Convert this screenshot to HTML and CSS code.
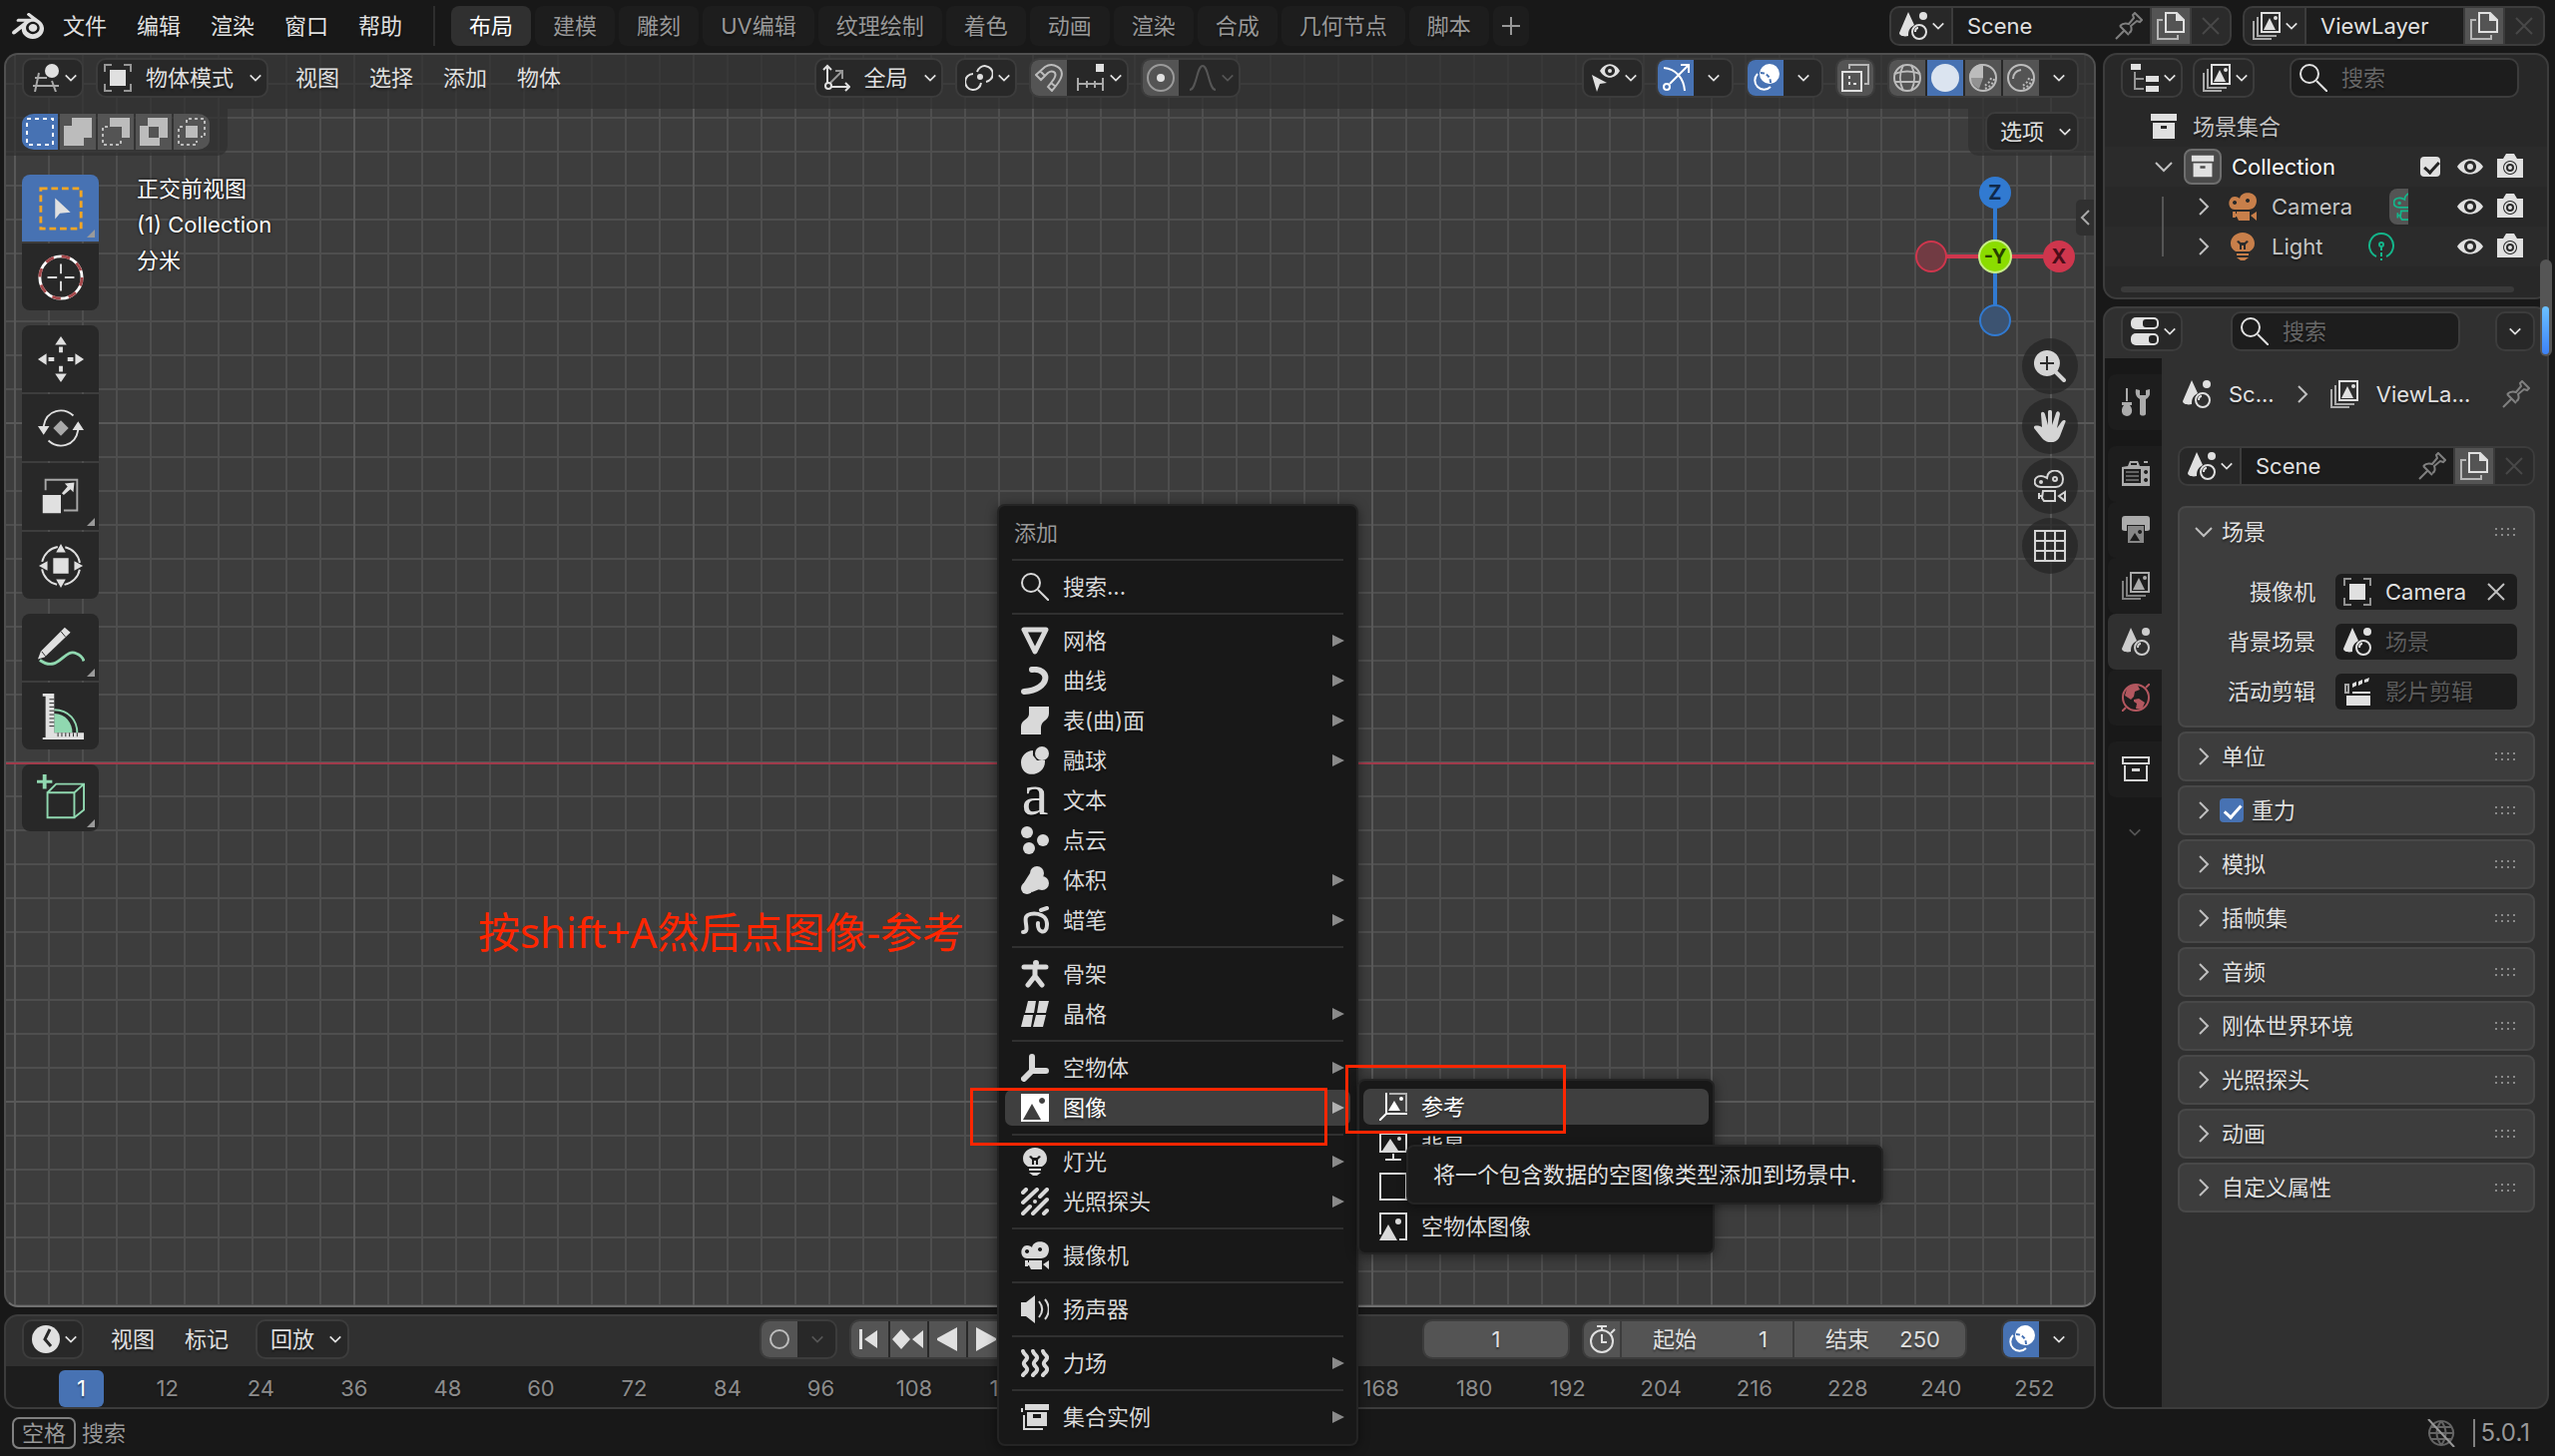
FILE: index.html
```html
<!DOCTYPE html>
<html lang="zh-CN">
<head>
<meta charset="utf-8">
<title>Blender</title>
<link rel="stylesheet" href="styles.css">
</head>
<body>
<svg class="sprite" aria-hidden="true">
  <symbol id="logo" viewBox="0 2 24 20"><path d="M12.51 13.214c.046-.8.438-1.506 1.03-2.006a3.424 3.424 0 0 1 2.212-.79c.85 0 1.631.3 2.211.79.592.5.983 1.206 1.028 2.005.045.823-.285 1.586-.865 2.153a3.389 3.389 0 0 1-2.374.938 3.393 3.393 0 0 1-2.376-.938c-.58-.567-.91-1.33-.865-2.152M7.35 14.831c.006.314.106.922.256 1.398a7.372 7.372 0 0 0 1.593 2.757 8.227 8.227 0 0 0 2.787 2.001 8.947 8.947 0 0 0 3.66.76 8.964 8.964 0 0 0 3.657-.772 8.285 8.285 0 0 0 2.785-2.01 7.428 7.428 0 0 0 1.592-2.762 6.964 6.964 0 0 0 .25-3.074 7.123 7.123 0 0 0-1.016-2.779 7.764 7.764 0 0 0-1.852-2.043h.002L13.566 2.55l-.02-.015c-.492-.378-1.319-.376-1.86.002-.547.382-.609 1.015-.123 1.415l-.001.001 3.126 2.543-9.53.01h-.013c-.788.001-1.545.518-1.695 1.172-.154.665.38 1.217 1.2 1.22V8.9l4.83-.01-8.62 6.617-.034.025c-.813.622-1.075 1.658-.563 2.313.52.667 1.625.668 2.447.004L7.414 14s-.069.52-.063.831zm12.09 1.741c-.97.988-2.326 1.548-3.795 1.55-1.47.004-2.827-.552-3.797-1.538a4.51 4.51 0 0 1-1.036-1.622 4.282 4.282 0 0 1 .282-3.519 4.702 4.702 0 0 1 1.153-1.371c.942-.768 2.141-1.183 3.396-1.185 1.256-.002 2.455.41 3.398 1.175.48.391.87.854 1.152 1.367a4.28 4.28 0 0 1 .522 1.706 4.236 4.236 0 0 1-.239 1.811 4.54 4.54 0 0 1-1.035 1.626"/></symbol>
  <symbol id="down" viewBox="0 0 16 16"><path class="ln" d="M2 5l6 6 6-6"/></symbol>
  <symbol id="bigdown" viewBox="0 0 20 20"><path class="ln" d="M2 6l8 8 8-8"/></symbol>
  <symbol id="bigright" viewBox="0 0 20 20"><path class="ln" d="M6 2l8 8-8 8"/></symbol>
  <symbol id="tri" viewBox="0 0 12 14"><path d="M0 1v12l12-6z"/></symbol>
  <symbol id="cross" viewBox="0 0 28 28"><path class="ln" d="M6 6l16 16M22 6L6 22"/></symbol>
  <symbol id="search" viewBox="0 0 28 28"><circle class="ln" cx="10" cy="10" r="9"/><path class="ln" d="M17 17l11 11"/></symbol>
  <symbol id="pin" viewBox="0 0 28 28"><path class="ln" d="M1 27l8-8M5 14l9 9M5 14c3-3 6-3 9-2l5-6-1-3 2-2 7 7-2 2-3-1-6 5c1 3 1 6-2 7"/></symbol>
  <symbol id="copy" viewBox="0 0 28 28"><path class="ln" d="M9 1h11l7 7v12H9z"/><path d="M19 0v9h9z"/><path class="ln" opacity=".7" d="M6 8H1v19h20v-4"/></symbol>
  <symbol id="scene" viewBox="0 0 28 28"><path d="M9 0L0 21c0 3 5 4 9 3 0-5 1-8 6-11z"/><circle cx="24" cy="4" r="4"/><circle class="ln" cx="20" cy="20" r="7"/><path class="ln" d="M16 20c0-2 1-4 3-4"/></symbol>
  <symbol id="layers" viewBox="0 0 28 28"><path class="ln" d="M9 1h18v19H9z"/><path d="M11 18l6-12 6 12z"/><circle cx="23" cy="6" r="2"/><path class="ln" opacity=".7" d="M5 5v19h19M1 9v18h18"/></symbol>
  <symbol id="grid3d" viewBox="0 0 28 28"><path class="ln" opacity=".7" d="M7 9L3 28M20 17l4 11M3 14h12M1 22h26"/><circle cx="20" cy="7" r="7"/></symbol>
  <symbol id="object" viewBox="0 0 28 28"><path d="M6 6h16v16H6z"/><path class="ln" opacity=".6" d="M1 8V1h7M20 1h7v7M27 20v7h-7M8 27H1v-7"/></symbol>
  <symbol id="axes" viewBox="0 0 28 28"><circle class="ln" cx="6" cy="22" r="3"/><path class="ln" d="M5 19V2M1 6l4-4 4 4M9 23h18M23 19l4 4-4 4"/><path class="ln" opacity=".6" d="M8 19L20 7M13 7h7v8"/></symbol>
  <symbol id="pivot" viewBox="0 0 28 28"><path class="ln" d="M12 8a8 8 0 1 1 9 10M16 19A8 8 0 1 1 8 10"/><circle cx="15" cy="13" r="3"/></symbol>
  <symbol id="magnet" viewBox="0 0 28 28"><path class="ln" d="M1 11L10 3C18-2 30 4 26 14c-2 5-6 9-9 13l-4-4c3-4 6-7 7-10 2-5-3-7-7-4l-7 7zM5 7l5 5M16 19l5 4"/></symbol>
  <symbol id="snapinc" viewBox="0 0 28 28"><path d="M19 0h8v8h-8z"/><path class="ln" opacity=".7" d="M1 14v13M10 17v7M18 17v7M26 14v13M1 20h25"/></symbol>
  <symbol id="prop" viewBox="0 0 28 28"><circle class="ln" opacity=".5" cx="14" cy="14" r="13"/><circle cx="14" cy="14" r="4"/></symbol>
  <symbol id="falloff" viewBox="0 0 28 28"><path class="ln" d="M1 26c7 0 7-24 13-24s6 24 13 24"/></symbol>
  <symbol id="visib" viewBox="0 0 28 28"><path fill-rule="evenodd" d="M8 7c5-9 15-9 20 0-5 9-15 9-20 0zm10-5a5 5 0 1 0 .1 0z"/><circle cx="18" cy="7" r="2"/><path d="M0 11l15 8-7 1-3 8z"/></symbol>
  <symbol id="gizmo" viewBox="0 0 28 28"><path class="ln" d="M2 4c12 1 20 10 21 23M8 20L26 2M19 1h8v8"/><circle class="ln" cx="5" cy="23" r="3"/></symbol>
  <symbol id="overlay" viewBox="0 0 28 28"><circle cx="18" cy="10" r="10"/><path class="ln" d="M6 10a9 9 0 1 0 13 13"/><path fill="none" stroke="#4772b3" stroke-width="2" stroke-dasharray="4 2" d="M9 9c6 0 10 4 10 10"/></symbol>
  <symbol id="xray" viewBox="0 0 28 28"><path class="ln" d="M1 8h19v19H1z"/><path class="ln" opacity=".7" d="M8 5V1h19v19h-4"/><path class="ln" stroke-dasharray="3 3" d="M8 12v8h8"/></symbol>
  <symbol id="wire" viewBox="0 0 28 28"><circle class="ln" cx="14" cy="14" r="13"/><path class="ln" d="M1 10c8-3 18-3 26 0M1 18h26M10 1c-4 8-4 18 0 26M18 1c4 8 4 18 0 26"/></symbol>
  <symbol id="solid" viewBox="0 0 28 28"><circle cx="14" cy="14" r="14"/></symbol>
  <symbol id="matprev" viewBox="0 0 28 28"><circle class="ln" cx="14" cy="14" r="13"/><path d="M14 0v14H0C0 6 6 0 14 0z"/><path d="M14 14h-13c1 5 5 9 9 11z" opacity=".6"/><path class="ln" stroke-dasharray="2 2" d="M25 15c-1 5-5 9-10 10M22 14c-1 4-4 7-7 8"/></symbol>
  <symbol id="rendered" viewBox="0 0 28 28"><circle class="ln" cx="14" cy="14" r="13"/><path class="ln" stroke-width="3" d="M6 15c0-5 3-8 8-9"/><path class="ln" stroke-dasharray="2 2" d="M25 15c-1 5-5 9-10 10M22 14c-1 4-4 7-7 8"/></symbol>
  <symbol id="cursor" viewBox="0 0 50 50"><path fill="none" stroke="#f5a623" stroke-width="3" stroke-dasharray="7 4" d="M4 4h42v42H4z"/><path d="M19 14v22l5-6 11-1z"/></symbol>
  <symbol id="cur3d" viewBox="0 0 50 50"><circle cx="25" cy="25" r="22" fill="none" stroke="#fff" stroke-width="3"/><circle cx="25" cy="25" r="22" fill="none" stroke="#a5484b" stroke-width="3" stroke-dasharray="9 8.280"/><path class="ln" d="M25 11v10M25 29v10M11 25h10M29 25h10"/></symbol>
  <symbol id="move" viewBox="0 0 50 50"><path d="M25 1l6 9H19zM25 49l6-9H19zM1 25l9-6v12zM49 25l-9-6v12z"/><path d="M23 12h4v6h-4zM23 32h4v6h-4zM12 23h6v4h-6zM32 23h6v4h-6z"/></symbol>
  <symbol id="rotate" viewBox="0 0 50 50"><path class="ln" stroke-width="3" d="M7 23C10 5 28 3 38 12M43 27C40 45 22 47 12 38"/><path d="M1 23h12l-6 9zM49 27H37l6-9z"/><path opacity=".7" d="M25 17l8 8-8 8-8-8z"/></symbol>
  <symbol id="scale" viewBox="0 0 50 50"><path fill="none" stroke="#a8a8a8" stroke-width="2" d="M9 18V7h33v32H28"/><path d="M6 23h19v19H6zM26 21l6-7-3-3 10-1-1 10-3-3-7 6z"/></symbol>
  <symbol id="transform" viewBox="0 0 50 50"><circle class="ln" cx="25" cy="25" r="20" stroke-dasharray="23.400 8" stroke-dashoffset="-4"/><path d="M17 17h16v16H17zM25 2l5 9H20zM25 48l5-9H20zM2 25l9-5v10zM48 25l-9-5v10z"/></symbol>
  <symbol id="annotate" viewBox="0 0 50 50"><path fill="none" stroke="#90d8b0" stroke-width="3" d="M3 38c20 14 25-13 38-7 5 2 7 5 8 8"/><path d="M1 37l3-8 25-25 6 5L8 35z"/><path fill="none" stroke="#282828" stroke-width="1" d="M25 8l5 6M5 29l4 5"/></symbol>
  <symbol id="measure" viewBox="0 0 50 50"><path fill="#90d8b0" d="M18 42V22c12 0 19 10 19 20z"/><path fill="none" stroke="#90d8b0" stroke-width="2" d="M18 18c16 0 24 12 24 24"/><path d="M6 1h12v41h31v7H6v-2h3V4H6z"/><path stroke="#282828" stroke-width="1" d="M13 7h5M13 11h5M13 15h5M13 19h5M13 23h5M13 27h5M13 31h5M13 35h5M22 42v4M26 42v4M30 42v4M34 42v4M38 42v4M42 42v4"/></symbol>
  <symbol id="addcube" viewBox="0 0 50 50"><path fill="#90d8b0" d="M6 0h4v6h6v3h-6v6H6V9H0V6h6z"/><path fill="none" stroke="#90d8b0" stroke-width="2" d="M11 19h28v26H11zM11 19l9-9h29L39 19M49 10v27l-10 8"/></symbol>
  <symbol id="zoom" viewBox="0 0 32 32"><path fill-rule="evenodd" d="M13 0a13 13 0 1 1-.1 0zM12 6v6H6v2h6v6h2v-6h6v-2h-6V6z"/><path stroke="currentColor" stroke-width="4" stroke-linecap="round" d="M21 21l9 9"/></symbol>
  <symbol id="hand" viewBox="0 0 32 32"><path d="M8 17L7 4c0-3 3-3 4 0l3 11V2c0-3 4-3 4 0v13l4-12c1-3 4-2 4 1l-3 14 5-7c2-2 5-1 3 2l-5 13c-3 8-13 8-18 2L0 18c-1-3 4-3 8-1z"/></symbol>
  <symbol id="camview" viewBox="0 0 32 32"><path class="ln" d="M7 17C-2 17-1 6 7 6c3 0 4 1 6 2C13-2 29-2 29 9c0 5-3 8-7 8z"/><circle class="ln" cx="21" cy="9" r="2"/><circle cx="7" cy="12" r="2"/><path class="ln" d="M9 21h12v10H10l-2-3zM5 23v6M5 26h4M31 22l-6 4 6 5z"/></symbol>
  <symbol id="gridbtn" viewBox="0 0 32 32"><path class="ln" d="M1 1h30v30H1zM11 1v30M21 1v30M1 11h30M1 21h30"/></symbol>
  <symbol id="outliner" viewBox="0 0 28 28"><path d="M0 0h10v6H0zM15 12h13v6H15zM15 22h13v6H15z"/><path class="ln" opacity=".6" d="M4 8v17h9M4 15h9"/></symbol>
  <symbol id="box" viewBox="0 0 28 28"><path d="M1 1h26v7H1z"/><path fill-rule="evenodd" d="M3 10h22v16H3zM11 13v3h6v-3z"/></symbol>
  <symbol id="boxline" viewBox="0 0 28 28"><path class="ln" d="M1 2h26v6H1zM3 10v15h22V10"/><path d="M10 13h8v3h-8z"/></symbol>
  <symbol id="eye" viewBox="0 0 28 28"><path fill-rule="evenodd" d="M1 14C7 4 21 4 27 14 21 24 7 24 1 14zM14 8a6 6 0 1 0 .1 0z"/><circle cx="14" cy="14" r="3"/></symbol>
  <symbol id="photo" viewBox="0 0 28 28"><path fill-rule="evenodd" d="M1 6h6l3-5h8l3 5h6v19H1zM14 8a7 7 0 1 0 .1 0z"/><circle cx="14" cy="15" r="5" class="ln"/><circle cx="14" cy="15" r="2"/></symbol>
  <symbol id="moviecam" viewBox="0 0 28 28"><path fill-rule="evenodd" d="M6 17C-2 17-1 4 6 4c3 0 4 1 5 2C12-2 28-2 28 8c0 5-3 9-8 9zM6 8a2 2 0 1 0 .1 0zM19 6a2 2 0 1 0 .1 0z"/><path d="M4 19h3v2h1v-2h13v9H10l-2-4H7v1H4zM28 19l-6 4 6 5z"/></symbol>
  <symbol id="bulb" viewBox="0 0 28 28"><path fill-rule="evenodd" d="M14 0c7 0 12 5 12 11 0 4-2 6-5 8H7c-3-2-5-4-5-8C2 5 7 0 14 0zM8 9l3 3v5h2v-4h2v4h2v-5l3-3-2-1-2 2h-4l-2-2z"/><path d="M8 21h12v2H8zM8 25h12l-4 3h-4z"/></symbol>
  <symbol id="lightdata" viewBox="0 0 28 28"><path class="ln" d="M9 24a12 12 0 1 1 10 0"/><circle class="ln" cx="14" cy="12" r="2"/><path class="ln" stroke-dasharray="4 2" d="M14 14v14"/></symbol>
  <symbol id="props" viewBox="0 0 28 28"><rect x="0" y="0" width="28" height="12" rx="5"/><rect x="12" y="2" width="14" height="8" rx="3" fill="#222"/><rect x="0" y="16" width="28" height="12" rx="5"/><rect x="18" y="18" width="8" height="8" rx="3" fill="#222"/></symbol>
  <symbol id="tools" viewBox="0 0 28 28"><path d="M4 0h2v13H4zM0 14h10v3H8c4 5 2 11-3 11S-2 22 2 17H0zM14 1c-1 6 1 8 4 10v15c1 2 5 2 6 0V11c3-2 5-4 4-10l-4 1v5h-6V2z"/></symbol>
  <symbol id="render" viewBox="0 0 28 28"><path fill-rule="evenodd" d="M0 7l6-1 2-5h8l2 5h10v20H0zM2 9v14h17V9zM24 10a2 2 0 1 0 .1 0zM24 18a2 2 0 1 0 .1 0zM9 3v2h6V3z"/><path d="M22 1h4v2h-4z"/><path class="ln" opacity=".5" d="M4 12h13M4 16h13M4 20h13"/></symbol>
  <symbol id="printer" viewBox="0 0 28 28"><path d="M0 3c0-2 1-3 3-3h22c2 0 3 1 3 3v10c0 1-1 2-3 2h-2V9H5v6H3c-2 0-3-1-3-2z"/><path opacity=".75" fill-rule="evenodd" d="M6 10h16v17H6zM8 25h10l-5-8zM18 14a2 2 0 1 0 .1 0z"/></symbol>
  <symbol id="world" viewBox="0 0 28 28"><circle class="ln" cx="14" cy="14" r="13"/><path d="M5 5c4-4 8-3 11-3l2 4-5 2-1 5-3 3-6-4zM12 16l5-1 3 2 3 2-3 7-6-1 1-5-3-2z"/><path class="ln" d="M0 28l4-4M24 4l4-4"/></symbol>
  <symbol id="clip" viewBox="0 0 28 28"><path d="M3 18h24v12H3zM9 14h18v2H9zM9 6l4-2v4l-4 2zM15 4l4-2v4l-4 2zM21 2l5-2-1 4-4 1z"/><path class="ln" opacity=".7" d="M2 7h3v8H2z"/></symbol>
  <symbol id="grip" viewBox="0 0 20 8"><path d="M0 0h2v2H0zM6 0h2v2H6zM12 0h2v2h-2zM18 0h2v2h-2zM0 6h2v2H0zM6 6h2v2H6zM12 6h2v2h-2zM18 6h2v2h-2z"/></symbol>
  <symbol id="mesh" viewBox="0 0 28 28"><path fill="none" stroke="currentColor" stroke-width="5" stroke-linejoin="round" d="M3 3h22L14 25z"/></symbol>
  <symbol id="curve" viewBox="0 0 28 28"><path fill="none" stroke="currentColor" stroke-width="6" stroke-linecap="round" d="M11 3c19-2 19 20-8 22"/></symbol>
  <symbol id="surface" viewBox="0 0 28 28"><path d="M8 0h20v7c0 7-8 7-8 14v7H0v-8c0-7 9-7 8-14z"/></symbol>
  <symbol id="meta" viewBox="0 0 28 28"><circle cx="21" cy="7" r="7"/><path d="M12 4v5l4 5h8c1 16-24 20-24 2C0 9 6 4 12 4z"/></symbol>
  <symbol id="points" viewBox="0 0 28 28"><circle cx="6" cy="6" r="6"/><circle cx="22" cy="14" r="6"/><circle cx="8" cy="22" r="6"/></symbol>
  <symbol id="volume" viewBox="0 0 28 28"><circle cx="16" cy="7" r="7"/><circle cx="21" cy="17" r="7"/><circle cx="6" cy="22" r="6"/><path d="M9 7L2 18l9 8 10-4V9z"/></symbol>
  <symbol id="gpencil" viewBox="0 0 28 28"><path fill="none" stroke="currentColor" stroke-width="4" stroke-linecap="round" d="M2 26c7 0 1-10 3-15C8 5 27 6 26 19c0 10-10 8-9-2M20 4l6-2"/></symbol>
  <symbol id="armature" viewBox="0 0 28 28"><circle cx="15" cy="3" r="3"/><path fill="none" stroke="currentColor" stroke-width="5" stroke-linecap="round" d="M3 7h22M14 9v8M14 16L7 25M14 16l7 9"/></symbol>
  <symbol id="lattice" viewBox="0 0 28 28"><path d="M7 1h8l-2 12H4zM18 1h10l-3 12h-9zM3 15h9l-2 12H0zM15 15h10l-3 12h-10z"/></symbol>
  <symbol id="empty" viewBox="0 0 28 28"><path fill="none" stroke="currentColor" stroke-width="6" stroke-linecap="round" d="M11 3v14h14M11 17l-8 8"/></symbol>
  <symbol id="image" viewBox="0 0 28 28"><path fill-rule="evenodd" d="M0 0h28v28H0zM2 26h18l-9-16zM21 4a3 3 0 1 0 .1 0z"/></symbol>
  <symbol id="probe" viewBox="0 0 28 28"><path fill="none" stroke="currentColor" stroke-width="4" stroke-linecap="round" d="M2 5l3-3M2 15L16 2M2 26l7-7M19 9l7-7M12 26l14-14M23 26l3-3"/><circle cx="14" cy="14" r="2"/></symbol>
  <symbol id="speaker" viewBox="0 0 28 28"><path d="M0 7h5l9-7v28l-9-7H0z"/><path class="ln" d="M18 6c4 5 4 11 0 16M24 4c5 6 5 14 0 20"/></symbol>
  <symbol id="force" viewBox="0 0 28 28"><path fill="none" stroke="currentColor" stroke-width="4" stroke-linecap="round" d="M2 2c1 4 5 4 4 7s-4 3-3 6 4 3 3 6-3 3-4 5M12 2c1 4 5 4 4 7s-4 3-3 6 4 3 3 6-3 3-4 5M22 2c1 4 5 4 4 7s-4 3-3 6 4 3 3 6-3 3-4 5"/></symbol>
  <symbol id="collinst" viewBox="0 0 28 28"><path d="M4 1h24v6H4z"/><path fill-rule="evenodd" d="M6 9h20v14H6zM12 11v4h8v-4z"/><path class="ln" d="M1 5v4M3 12v14h19"/></symbol>
  <symbol id="refimg" viewBox="0 0 28 28"><path class="ln" d="M7 0v21h21M7 21l-7 7"/><path class="ln" opacity=".6" d="M10 1h17v18"/><path d="M9 18l6-10 6 10z"/><circle cx="22" cy="6" r="2"/></symbol>
  <symbol id="bgimg" viewBox="0 0 28 28"><path class="ln" d="M1 1h26v18H1zM14 21v5M6 27h16"/><path d="M3 18l8-12 8 12z"/><circle cx="20" cy="6" r="2"/></symbol>
  <symbol id="square" viewBox="0 0 28 28"><path class="ln" d="M1 1h26v26H1z"/></symbol>
  <symbol id="emptyimg" viewBox="0 0 28 28"><path class="ln" d="M1 22V1h26v26h-7"/><path d="M0 28l9-16 9 16z"/><circle cx="19" cy="9" r="3"/></symbol>
  <symbol id="clock" viewBox="0 0 28 28"><circle cx="14" cy="14" r="14"/><path fill="none" stroke="#282828" stroke-width="3" d="M18 4l-5 10 6 7"/></symbol>
  <symbol id="record" viewBox="0 0 28 28"><circle class="ln" cx="14" cy="14" r="9"/></symbol>
  <symbol id="first" viewBox="0 0 28 28"><path d="M4 4h3v20H4zM22 5v18L9 14z"/></symbol>
  <symbol id="prevkey" viewBox="0 0 32 28"><path d="M9 4l9 10-9 10L0 14zM31 5v18l-11-9z"/></symbol>
  <symbol id="playrev" viewBox="0 0 28 28"><path d="M24 2v24L4 15v-2z"/></symbol>
  <symbol id="play" viewBox="0 0 28 28"><path d="M4 2v24l20-11v-2z"/></symbol>
  <symbol id="nextkey" viewBox="0 0 32 28"><path d="M23 4l9 10-9 10-9-10zM1 5v18l11-9z"/></symbol>
  <symbol id="last" viewBox="0 0 28 28"><path d="M21 4h3v20h-3zM6 5v18l13-9z"/></symbol>
  <symbol id="watch" viewBox="0 0 28 28"><circle class="ln" cx="14" cy="16" r="11"/><path class="ln" d="M14 9v8h5M14 1v4M9 1h10M23 8l4-4"/></symbol>
  <symbol id="offline" viewBox="0 0 28 28"><path class="ln" opacity=".6" d="M14 2a12 12 0 1 0 .1 0M2 14h24M4 8h20M4 20h20M14 2c-6 8-6 16 0 24M14 2c6 8 6 16 0 24"/><path class="ln" stroke-width="3" d="M1 0l26 28"/></symbol>
</svg>

<header class="topbar">
  <button class="logo" aria-label="Blender"><svg><use href="#logo"/></svg></button>
  <nav class="menus"><button>文件</button><button>编辑</button><button>渲染</button><button>窗口</button><button>帮助</button></nav>
  <span class="vsep"></span>
  <nav class="tabs">
    <button class="on">布局</button><button>建模</button><button>雕刻</button><button>UV编辑</button><button>纹理绘制</button><button>着色</button><button>动画</button><button>渲染</button><button>合成</button><button>几何节点</button><button>脚本</button><button class="plus" aria-label="添加工作区"><svg viewBox="0 0 18 18"><path class="ln" d="M9 0v18M0 9h18"/></svg></button>
  </nav>
  <div class="group idblock push scene-id">
    <button class="pick" aria-label="浏览场景"><svg class="i"><use href="#scene"/></svg><svg class="c"><use href="#down"/></svg></button>
    <span class="field"><input type="text" value="Scene" aria-label="场景名称"><svg class="i dim"><use href="#pin"/></svg></span>
    <button class="seg lit" aria-label="新建场景"><svg class="i"><use href="#copy"/></svg></button>
    <button class="seg off" aria-label="删除场景"><svg class="i"><use href="#cross"/></svg></button>
  </div>
  <div class="group idblock layer-id">
    <button class="pick" aria-label="浏览视图层"><svg class="i"><use href="#layers"/></svg><svg class="c"><use href="#down"/></svg></button>
    <span class="field"><input type="text" value="ViewLayer" aria-label="视图层名称"></span>
    <button class="seg lit" aria-label="新建视图层"><svg class="i"><use href="#copy"/></svg></button>
    <button class="seg off" aria-label="删除视图层"><svg class="i"><use href="#cross"/></svg></button>
  </div>
</header>

<main class="workspace">
  <div class="left">
    <section class="viewport">
      <div class="vp-header">
        <div class="cluster">
          <div class="group"><button class="pick" aria-label="编辑器类型"><svg class="i"><use href="#grid3d"/></svg><svg class="c"><use href="#down"/></svg></button></div>
          <label class="group dropdown"><svg class="i"><use href="#object"/></svg><select aria-label="模式"><option>物体模式</option></select><svg class="c"><use href="#down"/></svg></label>
          <nav class="menus"><button>视图</button><button>选择</button><button>添加</button><button>物体</button></nav>
        </div>
        <div class="cluster">
          <label class="group dropdown"><svg class="i"><use href="#axes"/></svg><select aria-label="变换坐标系"><option>全局</option></select><svg class="c"><use href="#down"/></svg></label>
          <div class="group"><button class="pick" aria-label="轴心点"><svg class="i"><use href="#pivot"/></svg><svg class="c"><use href="#down"/></svg></button></div>
          <div class="group"><button class="seg lit soft" aria-label="吸附"><svg class="i"><use href="#magnet"/></svg></button><button class="pick" aria-label="吸附至"><svg class="i"><use href="#snapinc"/></svg><svg class="c"><use href="#down"/></svg></button></div>
          <div class="group"><button class="seg lit" aria-label="衰减编辑"><svg class="i"><use href="#prop"/></svg></button><button class="pick faint" aria-label="衰减曲线"><svg class="i"><use href="#falloff"/></svg><svg class="c"><use href="#down"/></svg></button></div>
        </div>
        <div class="cluster shading">
          <div class="group"><button class="pick" aria-label="可见性"><svg class="i"><use href="#visib"/></svg><svg class="c"><use href="#down"/></svg></button></div>
          <div class="group"><button class="seg blue" aria-label="显示操纵器"><svg class="i"><use href="#gizmo"/></svg></button><button class="seg" aria-label="操纵器选项"><svg class="c"><use href="#down"/></svg></button></div>
          <div class="group"><button class="seg blue" aria-label="显示叠加层"><svg class="i"><use href="#overlay"/></svg></button><button class="seg" aria-label="叠加层选项"><svg class="c"><use href="#down"/></svg></button></div>
          <div class="group"><button class="seg lit" aria-label="透视模式"><svg class="i"><use href="#xray"/></svg></button></div>
          <div class="group"><button class="seg lit soft" aria-label="线框"><svg class="i"><use href="#wire"/></svg></button><button class="seg blue" aria-label="实体"><svg class="i pale"><use href="#solid"/></svg></button><button class="seg lit soft" aria-label="材质预览"><svg class="i"><use href="#matprev"/></svg></button><button class="seg lit soft" aria-label="渲染"><svg class="i"><use href="#rendered"/></svg></button><button class="seg" aria-label="着色选项"><svg class="c"><use href="#down"/></svg></button></div>
        </div>
      </div>
      <div class="vp-settings">
        <div class="ear ear-left">
          <div class="group modes">
            <button class="seg blue" aria-label="新选区"><svg class="i" viewBox="0 0 28 28"><path class="ln" stroke-dasharray="4 4" d="M1 1h26v26H1z"/></svg></button>
            <button class="seg lit soft" aria-label="扩展"><svg class="i" viewBox="0 0 28 28"><path d="M8 0h20v20h-8v8H0V8h8z"/></svg></button>
            <button class="seg lit soft" aria-label="减去"><svg class="i" viewBox="0 0 28 28"><path d="M8 0h20v20h-8V9H8z"/><path class="ln" stroke-dasharray="3 3" d="M6 9H1v18h18v-5"/></svg></button>
            <button class="seg lit soft" aria-label="差值"><svg class="i" viewBox="0 0 28 28"><path fill-rule="evenodd" d="M8 0h20v20h-8v8H0V8h8zM9 9v11h10V9z"/></svg></button>
            <button class="seg lit soft" aria-label="相交"><svg class="i" viewBox="0 0 28 28"><path d="M8 8h12v12H8z"/><path class="ln" stroke-dasharray="3 3" d="M9 5V1h18v18h-4M5 9H1v18h18v-4"/></svg></button>
          </div>
        </div>
        <div class="ear ear-right"><button class="group options">选项<svg class="c"><use href="#down"/></svg></button></div>
      </div>
      <div class="vp-body">
        <div class="toolbar">
          <div class="toolset">
            <button class="on more" aria-label="框选"><svg><use href="#cursor"/></svg></button>
            <button aria-label="游标"><svg><use href="#cur3d"/></svg></button>
          </div>
          <div class="toolset">
            <button aria-label="移动"><svg><use href="#move"/></svg></button>
            <button aria-label="旋转"><svg><use href="#rotate"/></svg></button>
            <button class="more" aria-label="缩放"><svg><use href="#scale"/></svg></button>
            <button aria-label="变换"><svg><use href="#transform"/></svg></button>
          </div>
          <div class="toolset">
            <button class="more" aria-label="标注"><svg><use href="#annotate"/></svg></button>
            <button aria-label="测量"><svg><use href="#measure"/></svg></button>
          </div>
          <div class="toolset">
            <button class="more" aria-label="添加立方体"><svg><use href="#addcube"/></svg></button>
          </div>
        </div>
        <div class="info"><p>正交前视图</p><p>(1) Collection</p><p>分米</p></div>
        <div class="navcol">
          <svg class="axisgizmo" viewBox="0 0 166 159">
            <path stroke="#317ad1" stroke-width="4" d="M83 17v128"/>
            <path stroke="#cf364d" stroke-width="4" d="M19 81h128"/>
            <circle cx="83" cy="17" r="16" fill="#317ad1"/>
            <circle cx="83" cy="145" r="15" fill="#3c5371" stroke="#317ad1" stroke-width="2"/>
            <circle cx="147" cy="81" r="16" fill="#cf364d"/>
            <circle cx="19" cy="81" r="15" fill="#713b43" stroke="#cf364d" stroke-width="2"/>
            <circle cx="83" cy="81" r="16" fill="#8bdc00" stroke="#c6ed86" stroke-width="2"/>
            <g class="axislabel"><text x="83" y="24" fill="#10294a">Z</text><text x="83" y="88" fill="#274000">-Y</text><text x="147" y="88" fill="#4a0d18">X</text></g>
          </svg>
          <button aria-label="缩放视图"><svg><use href="#zoom"/></svg></button>
          <button aria-label="平移视图"><svg><use href="#hand"/></svg></button>
          <button aria-label="摄像机视角"><svg><use href="#camview"/></svg></button>
          <button aria-label="切换正交"><svg><use href="#gridbtn"/></svg></button>
        </div>
      </div>
      <button class="sidetoggle" aria-label="侧栏"><svg viewBox="0 0 10 16"><path class="ln" d="M9 1L2 8l7 7"/></svg></button>
    </section>

    <section class="timeline">
      <div class="tl-header">
        <div class="cluster">
          <div class="group"><button class="pick" aria-label="编辑器类型"><svg class="i"><use href="#clock"/></svg><svg class="c"><use href="#down"/></svg></button></div>
          <nav class="menus"><button>视图</button><button>标记</button></nav>
          <button class="group options">回放<svg class="c"><use href="#down"/></svg></button>
        </div>
        <span class="gap-a"></span>
        <div class="cluster">
          <div class="group"><button class="seg lit soft" aria-label="自动插帧"><svg class="i"><use href="#record"/></svg></button><button class="seg faint" aria-label="插帧选项"><svg class="c"><use href="#down"/></svg></button></div>
          <div class="group transport">
            <button class="seg lit" aria-label="首帧"><svg class="i"><use href="#first"/></svg></button>
            <button class="seg lit" aria-label="上一关键帧"><svg class="i wide"><use href="#prevkey"/></svg></button>
            <button class="seg lit" aria-label="倒放"><svg class="i"><use href="#playrev"/></svg></button>
            <button class="seg lit" aria-label="播放"><svg class="i"><use href="#play"/></svg></button>
            <button class="seg lit" aria-label="下一关键帧"><svg class="i wide"><use href="#nextkey"/></svg></button>
            <button class="seg lit" aria-label="末帧"><svg class="i"><use href="#last"/></svg></button>
          </div>
        </div>
        <span class="gap-b"></span>
        <div class="cluster">
          <div class="group"><input class="frame" type="text" value="1" aria-label="当前帧"></div>
          <div class="group range">
            <button class="seg lit" aria-label="使用预览范围"><svg class="i"><use href="#watch"/></svg></button>
            <label>起始<input type="text" value="1"></label>
            <label>结束<input type="text" value="250"></label>
          </div>
          <div class="group tl-overlay"><button class="seg blue" aria-label="叠加层"><svg class="i"><use href="#overlay"/></svg></button><button class="seg" aria-label="叠加层选项"><svg class="c"><use href="#down"/></svg></button></div>
        </div>
      </div>
      <div class="ruler">
        <span class="now">1</span>
        <span>12</span><span>24</span><span>36</span><span>48</span><span>60</span><span>72</span><span>84</span><span>96</span><span>108</span><span>120</span><span>132</span><span>144</span><span>156</span><span>168</span><span>180</span><span>192</span><span>204</span><span>216</span><span>228</span><span>240</span><span>252</span>
      </div>
    </section>
  </div>

  <aside class="right">
    <section class="outliner">
      <div class="side-header">
        <div class="group"><button class="pick" aria-label="编辑器类型"><svg class="i"><use href="#outliner"/></svg><svg class="c"><use href="#down"/></svg></button></div>
        <div class="group"><button class="pick" aria-label="显示模式"><svg class="i"><use href="#layers"/></svg><svg class="c"><use href="#down"/></svg></button></div>
        <label class="group searchbox push"><svg class="i"><use href="#search"/></svg><input type="text" placeholder="搜索" aria-label="搜索大纲"></label>
      </div>
      <ul class="tree">
        <li class="row root"><svg class="i"><use href="#box"/></svg><span>场景集合</span></li>
        <li class="row coll"><svg class="t"><use href="#bigdown"/></svg><svg class="i ring"><use href="#box"/></svg><span class="active">Collection</span>
          <span class="toggles"><input class="tick" type="checkbox" checked aria-label="启用集合"><svg class="i"><use href="#eye"/></svg><svg class="i"><use href="#photo"/></svg></span></li>
        <li class="row item"><svg class="t"><use href="#bigright"/></svg><svg class="i orange"><use href="#moviecam"/></svg><span>Camera</span><span class="data cut"><svg class="i"><use href="#camview"/></svg></span>
          <span class="toggles"><svg class="i"><use href="#eye"/></svg><svg class="i"><use href="#photo"/></svg></span></li>
        <li class="row item"><svg class="t"><use href="#bigright"/></svg><svg class="i orange"><use href="#bulb"/></svg><span>Light</span><span class="data"><svg class="i"><use href="#lightdata"/></svg></span>
          <span class="toggles"><svg class="i"><use href="#eye"/></svg><svg class="i"><use href="#photo"/></svg></span></li>
      </ul>
      <div class="hscroll"></div>
    </section>

    <section class="properties">
      <div class="side-header">
        <div class="group"><button class="pick" aria-label="编辑器类型"><svg class="i"><use href="#props"/></svg><svg class="c"><use href="#down"/></svg></button></div>
        <label class="group searchbox push"><svg class="i"><use href="#search"/></svg><input type="text" placeholder="搜索" aria-label="搜索属性"></label>
        <div class="group after-search"><button class="seg" aria-label="选项"><svg class="c"><use href="#down"/></svg></button></div>
      </div>
      <div class="prop-body">
        <nav class="ptabs">
          <button class="solo" aria-label="工具"><svg class="i"><use href="#tools"/></svg></button>
          <button aria-label="渲染"><svg class="i"><use href="#render"/></svg></button>
          <button aria-label="输出"><svg class="i"><use href="#printer"/></svg></button>
          <button aria-label="视图层"><svg class="i"><use href="#layers"/></svg></button>
          <button class="on" aria-label="场景"><svg class="i"><use href="#scene"/></svg></button>
          <button class="red" aria-label="世界环境"><svg class="i"><use href="#world"/></svg></button>
          <button class="last" aria-label="集合"><svg class="i"><use href="#boxline"/></svg></button>
          <svg class="c more-tabs"><use href="#down"/></svg>
        </nav>
        <div class="pcontent">
          <div class="crumbs"><svg class="i"><use href="#scene"/></svg><span>Sc...</span><svg class="t"><use href="#bigright"/></svg><svg class="i"><use href="#layers"/></svg><span>ViewLa...</span><svg class="i dim push"><use href="#pin"/></svg></div>
          <div class="group idblock">
            <button class="pick" aria-label="浏览场景"><svg class="i"><use href="#scene"/></svg><svg class="c"><use href="#down"/></svg></button>
            <span class="field"><input type="text" value="Scene" aria-label="场景"><svg class="i dim"><use href="#pin"/></svg></span>
            <button class="seg lit" aria-label="新建"><svg class="i"><use href="#copy"/></svg></button>
            <button class="seg off" aria-label="删除"><svg class="i"><use href="#cross"/></svg></button>
          </div>
          <section class="panel open">
            <h2><button><svg class="t"><use href="#bigdown"/></svg>场景</button><svg class="grip"><use href="#grip"/></svg></h2>
            <div class="prow"><span>摄像机</span><div class="slot"><svg class="i"><use href="#object"/></svg><b>Camera</b><button aria-label="清除"><svg class="i"><use href="#cross"/></svg></button></div></div>
            <div class="prow"><span>背景场景</span><div class="slot blank"><svg class="i"><use href="#scene"/></svg><b>场景</b></div></div>
            <div class="prow"><span>活动剪辑</span><div class="slot blank"><svg class="i"><use href="#clip"/></svg><b>影片剪辑</b></div></div>
          </section>
          <div class="panels">
            <section class="panel"><h2><button><svg class="t"><use href="#bigright"/></svg>单位</button><svg class="grip"><use href="#grip"/></svg></h2></section>
            <section class="panel"><h2><button aria-label="展开重力"><svg class="t"><use href="#bigright"/></svg></button><label class="check"><input class="tick" type="checkbox" checked>重力</label><svg class="grip"><use href="#grip"/></svg></h2></section>
            <section class="panel"><h2><button><svg class="t"><use href="#bigright"/></svg>模拟</button><svg class="grip"><use href="#grip"/></svg></h2></section>
            <section class="panel"><h2><button><svg class="t"><use href="#bigright"/></svg>插帧集</button><svg class="grip"><use href="#grip"/></svg></h2></section>
            <section class="panel"><h2><button><svg class="t"><use href="#bigright"/></svg>音频</button><svg class="grip"><use href="#grip"/></svg></h2></section>
            <section class="panel"><h2><button><svg class="t"><use href="#bigright"/></svg>刚体世界环境</button><svg class="grip"><use href="#grip"/></svg></h2></section>
            <section class="panel"><h2><button><svg class="t"><use href="#bigright"/></svg>光照探头</button><svg class="grip"><use href="#grip"/></svg></h2></section>
            <section class="panel"><h2><button><svg class="t"><use href="#bigright"/></svg>动画</button><svg class="grip"><use href="#grip"/></svg></h2></section>
            <section class="panel"><h2><button><svg class="t"><use href="#bigright"/></svg>自定义属性</button><svg class="grip"><use href="#grip"/></svg></h2></section>
          </div>
        </div>
      </div>
    </section>
    <div class="vscroll"><span></span></div>
  </aside>
</main>

<footer class="status"><kbd>空格</kbd><span>搜索</span><svg class="i push"><use href="#offline"/></svg><span class="version">5.0.1</span></footer>

<div class="menu add-menu">
  <h3>添加</h3>
  <hr>
  <button><svg class="i"><use href="#search"/></svg>搜索...</button>
  <hr>
  <button><svg class="i"><use href="#mesh"/></svg>网格<svg class="a"><use href="#tri"/></svg></button>
  <button><svg class="i"><use href="#curve"/></svg>曲线<svg class="a"><use href="#tri"/></svg></button>
  <button><svg class="i"><use href="#surface"/></svg>表(曲)面<svg class="a"><use href="#tri"/></svg></button>
  <button><svg class="i"><use href="#meta"/></svg>融球<svg class="a"><use href="#tri"/></svg></button>
  <button><span class="i letter" aria-hidden="true">a</span>文本</button>
  <button><svg class="i"><use href="#points"/></svg>点云</button>
  <button><svg class="i"><use href="#volume"/></svg>体积<svg class="a"><use href="#tri"/></svg></button>
  <button><svg class="i"><use href="#gpencil"/></svg>蜡笔<svg class="a"><use href="#tri"/></svg></button>
  <hr>
  <button><svg class="i"><use href="#armature"/></svg>骨架</button>
  <button><svg class="i"><use href="#lattice"/></svg>晶格<svg class="a"><use href="#tri"/></svg></button>
  <hr>
  <button><svg class="i"><use href="#empty"/></svg>空物体<svg class="a"><use href="#tri"/></svg></button>
  <button class="on"><svg class="i"><use href="#image"/></svg>图像<svg class="a"><use href="#tri"/></svg></button>
  <hr>
  <button><svg class="i"><use href="#bulb"/></svg>灯光<svg class="a"><use href="#tri"/></svg></button>
  <button><svg class="i"><use href="#probe"/></svg>光照探头<svg class="a"><use href="#tri"/></svg></button>
  <hr>
  <button><svg class="i"><use href="#moviecam"/></svg>摄像机</button>
  <hr>
  <button><svg class="i"><use href="#speaker"/></svg>扬声器</button>
  <hr>
  <button><svg class="i"><use href="#force"/></svg>力场<svg class="a"><use href="#tri"/></svg></button>
  <hr>
  <button><svg class="i"><use href="#collinst"/></svg>集合实例<svg class="a"><use href="#tri"/></svg></button>
</div>
<div class="menu sub-menu">
  <button class="on"><svg class="i"><use href="#refimg"/></svg>参考</button>
  <button><svg class="i"><use href="#bgimg"/></svg>背景</button>
  <button aria-label="网格平面"><svg class="i"><use href="#square"/></svg></button>
  <button><svg class="i"><use href="#emptyimg"/></svg>空物体图像</button>
</div>
<div class="tooltip" role="tooltip">将一个包含数据的空图像类型添加到场景中.</div>
<div class="mark mark-image"></div>
<div class="mark mark-reference"></div>
<p class="note">按shift+A然后点图像-参考</p>
</body>
</html>
```
FILE: styles.css
```css
* { box-sizing: border-box; margin: 0; padding: 0; }
html, body { height: 100%; }
body {
  position: relative;
  display: flex;
  flex-direction: column;
  overflow: hidden;
  background: #181818;
  color: #e0e0e0;
  font: 22px/36px Inter, "Noto Sans CJK SC", sans-serif;
  text-shadow: 0 2px 2px rgba(0, 0, 0, .45);
}
button, input, select {
  border: 0;
  background: none;
  color: inherit;
  font: inherit;
  text-shadow: inherit;
  outline: 0;
}
button { display: flex; align-items: center; white-space: nowrap; }
select { appearance: none; }
svg { display: block; flex: none; fill: currentColor; overflow: visible; }
.sprite { position: absolute; width: 0; height: 0; }
.ln { fill: none; stroke: currentColor; stroke-width: 2; }
.i { flex: none; width: 28px; height: 28px; }
.i.wide { width: 32px; }
.c { width: 14px; height: 14px; }
.t { width: 20px; height: 20px; color: #c0c0c0; }
.dim { color: #808080; }
.pale { color: #dbe4f0; }
.push { margin-left: auto; }

/* shared control groups */
.group {
  display: flex;
  gap: 2px;
  height: 40px;
  border: 2px solid #3c3c3c;
  border-radius: 10px;
  background: #282828;
  overflow: hidden;
}
.cluster { display: flex; gap: 12px; }
.pick { width: 58px; padding-left: 8px; gap: 4px; }
.seg { justify-content: center; width: 36px; }
.lit { background: #545454; }
.soft { color: #bcbcbc; }
.blue { background: #4772b3; color: #fff; }
.off { background: #2b2b2b; color: #484848; }
.faint { color: #555; }
.menus { display: flex; }
.menus button { height: 40px; padding: 0 15px; }
.dropdown { align-items: center; gap: 14px; padding: 0 4px 0 6px; }
.dropdown select { height: 36px; }
.options { gap: 14px; padding: 0 5px 0 13px; }

/* top bar */
.topbar { display: flex; flex: none; height: 53px; padding: 6px 10px 0 12px; }
.logo { width: 36px; height: 40px; }
.logo svg { width: 32px; height: 28px; }
.vsep { width: 2px; height: 40px; margin: 0 16px; background: #2e2e2e; }
.tabs { display: flex; gap: 4px; }
.tabs button { height: 40px; padding: 0 18px; border-radius: 8px; background: #1d1d1d; color: #989898; }
.tabs button.on { background: #303030; color: #fff; }
.tabs .plus { padding: 0 9px; }
.plus svg { width: 18px; height: 18px; }
.scene-id { width: 343px; margin-right: 11px; }
.layer-id { width: 303px; }
.idblock { background: #3c3c3c; }
.idblock .pick { width: 60px; background: #282828; }
.idblock .seg { width: 38px; }
.field { display: flex; flex: 1; align-items: center; min-width: 0; padding: 0 7px 0 14px; background: #1d1d1d; }
.field input { flex: 1; min-width: 0; }

/* editors */
.workspace { display: flex; flex: 1; gap: 7px; min-height: 0; padding: 0 6px 0 4px; }
.left { display: flex; flex: 1; flex-direction: column; gap: 7px; min-width: 0; }
.right { position: relative; display: flex; flex: none; flex-direction: column; gap: 7px; width: 447px; }
.viewport, .timeline, .outliner, .properties { border: 2px solid #3c3c3c; border-radius: 14px; overflow: hidden; }

.viewport {
  position: relative;
  flex: 1;
  min-height: 0;
  border-color: #505050;
  border-bottom-color: #707070;
  background-color: #3d3d3d;
  background-image:
    linear-gradient(#a03a4a, #a03a4a),
    linear-gradient(#585858 2px, transparent 2px),
    linear-gradient(to right, #585858 2px, transparent 2px),
    linear-gradient(#4e4e4e 2px, transparent 2px),
    linear-gradient(to right, #4e4e4e 2px, transparent 2px);
  background-repeat: no-repeat, repeat, repeat, repeat, repeat;
  background-size: 100% 2px, 340px 340px, 340px 340px, 34px 34px, 34px 34px;
  background-position: 0 711px, 10px 30px, 10px 30px, 10px 30px, 10px 30px;
  background-origin: border-box;
}
.vp-header {
  display: flex;
  justify-content: space-between;
  height: 54px;
  padding: 3px 15px 0 16px;
  background: rgba(47, 47, 47, .7);
}
.shading { padding-left: 104px; }
.vp-settings { display: flex; justify-content: space-between; height: 47px; }
.ear { padding-top: 3px; background: rgba(47, 47, 47, .7); }
.ear-left { padding: 3px 18px 0 16px; border-bottom-right-radius: 10px; }
.ear-right { padding: 3px 15px 0 17px; border-bottom-left-radius: 10px; }
.modes { border-color: transparent; border-width: 2px 0; border-radius: 12px; background: none; background-clip: padding-box; }
.vp-body { display: flex; }
.toolbar { display: flex; flex-direction: column; gap: 15px; padding: 19px 0 0 16px; }
.toolset { display: flex; flex-direction: column; gap: 2px; border-radius: 8px; overflow: hidden; }
.toolset button { position: relative; justify-content: center; width: 77px; height: 67px; background: #282828; }
.toolset button.on { background: #4772b3; }
.toolset svg { width: 48px; height: 48px; }
.more::after {
  content: "";
  position: absolute;
  right: 4px;
  bottom: 4px;
  border: 4px solid;
  border-color: transparent #9a9a9a #9a9a9a transparent;
}
.info { padding: 15px 0 0 38px; color: #fff; text-shadow: 0 0 3px #000; }
.navcol { display: flex; flex-direction: column; align-items: flex-end; gap: 4px; margin-left: auto; padding: 20px 16px 0 0; }
.axisgizmo { width: 166px; height: 159px; }
.axislabel { font-size: 20px; font-weight: 700; text-anchor: middle; text-shadow: none; }
.navcol button { justify-content: center; width: 56px; height: 56px; border-radius: 50%; background: rgba(35, 35, 35, .7); color: #d5d5d5; }
.navcol button svg { width: 32px; height: 32px; }
.sidetoggle {
  position: absolute;
  top: 145px;
  right: 0;
  justify-content: center;
  width: 18px;
  height: 36px;
  border-radius: 5px 0 0 5px;
  background: #303030;
  color: #aaa;
}
.sidetoggle svg { width: 10px; height: 16px; }

/* timeline */
.timeline { flex: none; height: 95px; background: #303030; }
.tl-header { display: flex; height: 50px; padding: 3px 15px 0 16px; }
.gap-a { flex: 17; }
.gap-b { flex: 14; }
.transport .seg { width: 37px; }
.frame { width: 144px; background: #545454; text-align: center; }
.range { width: 386px; background: #3c3c3c; }
.range label { display: flex; flex: 1; gap: 10px; min-width: 0; padding: 0 25px 0 31px; background: #545454; }
.range input { flex: 1; min-width: 0; text-align: right; }
.tl-overlay { margin-left: 22px; }
.ruler { display: flex; height: 41px; padding: 4px 13px 0 53px; background: #1d1d1d; color: #8c8c8c; }
.ruler span { flex: 1; text-align: center; }
.ruler .now { flex: none; width: 45px; margin-right: 17px; border-radius: 6px; background: #4772b3; color: #fff; }

/* outliner */
.side-header { display: flex; gap: 10px; height: 52px; padding: 3px 12px 0 16px; }
.outliner { flex: none; height: 247px; background: #282828; }
.outliner .side-header { padding-right: 28px; }
.searchbox { align-items: center; gap: 14px; width: 230px; padding-left: 8px; background: #1d1d1d; }
.searchbox input { width: 140px; }
.searchbox input::placeholder { color: #666; opacity: 1; }
.tree { position: relative; list-style: none; color: #c4c4c4; }
.tree::before { content: ""; position: absolute; left: 57px; top: 90px; width: 2px; height: 60px; background: #555; }
.row { display: flex; align-items: center; gap: 15px; height: 40px; padding-right: 23px; }
.row:nth-child(even) { background: #2b2b2b; }
.row .i { color: #e0e0e0; }
.root { padding-left: 45px; }
.coll { padding-left: 49px; }
.item { padding-left: 89px; }
.active { color: #fff; }
.row .ring { width: 38px; height: 36px; margin: 0 -5px; padding: 4px; border: 2px solid #6e6e6e; border-radius: 8px; background: #4a4a4a; }
.row .orange { color: #c87f4a; }
.data { margin-left: 30px; }
.row .data .i { color: #14b58a; }
.data.cut { width: 19px; height: 36px; margin-left: 22px; padding: 4px 0 0 4px; border-radius: 8px 0 0 8px; background: #545454; overflow: hidden; }
.toggles { display: flex; align-items: center; gap: 12px; margin-left: auto; }
.tick { appearance: none; position: relative; flex: none; width: 20px; height: 20px; margin-right: 4px; border-radius: 4px; background: #e0e0e0; color: #222; }
.tick::after { content: ""; position: absolute; left: 35%; top: 12%; width: 30%; height: 60%; border: solid; border-width: 0 3px 3px 0; transform: rotate(42deg); }
.hscroll { height: 6px; margin: 20px 33px 0 16px; border-radius: 3px; background: #3a3a3a; }
.vscroll { position: absolute; right: -3px; top: 207px; width: 12px; height: 97px; padding: 47px 3px 2px 2px; border-radius: 6px; background: #555; }
.vscroll span { display: block; height: 100%; border-radius: 4px; background: linear-gradient(#6bc1ff, #3d82f7); }

/* properties */
.properties { display: flex; flex: 1; flex-direction: column; background: #303030; }
.properties .side-header { flex: none; height: 50px; }
.after-search { margin-left: 25px; }
.prop-body { display: flex; flex: 1; }
.ptabs { flex: none; width: 57px; padding: 16px 0 0 3px; background: #181818; color: #ababab; }
.ptabs button { width: 54px; height: 56px; padding-left: 14px; border-radius: 8px 0 0 8px; background: #1d1d1d; }
.ptabs .solo { margin-bottom: 16px; }
.ptabs .on { background: #303030; color: #ccc; }
.ptabs .red { color: #b3575f; }
.ptabs .last { margin-top: 16px; color: #d5d5d5; }
.more-tabs { margin: 28px 0 0 20px; color: #555; }
.pcontent { flex: 1; min-width: 0; padding: 16px 12px 0 16px; }
.crumbs { display: flex; align-items: center; gap: 18px; height: 40px; margin-bottom: 32px; padding: 0 5px; }
.crumbs .push { margin-left: auto; }
.panel { border: 2px solid #484848; border-radius: 8px; background: #3d3d3d; }
.panel h2 { display: flex; align-items: center; height: 46px; padding: 0 18px 0 14px; font: inherit; }
.panel h2 button { gap: 8px; }
.grip { width: 20px; height: 8px; margin-left: auto; color: #8a8a8a; }
.panel.open { margin: 20px 0 4px; padding-bottom: 16px; }
.panel.open h2 { height: 48px; margin-bottom: 18px; }
.panels { display: flex; flex-direction: column; gap: 4px; }
.check { display: flex; align-items: center; gap: 8px; margin-left: 6px; }
.check .tick { width: 24px; height: 24px; margin: 0; background: #4772b3; color: #fff; }
.prow { display: flex; justify-content: flex-end; gap: 20px; margin-bottom: 14px; padding-right: 16px; }
.prow:last-child { margin-bottom: 0; }
.slot { display: flex; align-items: center; gap: 14px; width: 182px; height: 36px; padding-left: 8px; border-radius: 6px; background: #1d1d1d; }
.slot b { font-weight: 400; }
.slot.blank b { color: #5c5c5c; }
.slot button { margin: 0 7px 0 auto; color: #c0c0c0; }

/* status bar */
.status { display: flex; align-items: center; gap: 6px; flex: none; height: 47px; padding: 0 25px 0 12px; color: #989898; }
.status kbd { height: 32px; padding: 0 8px; border: 2px solid #808080; border-radius: 7px; font: inherit; line-height: 28px; }
.version { height: 28px; margin-left: 12px; padding-left: 6px; border-left: 2px solid #808080; font-size: 24px; line-height: 28px; }

/* pop-ups */
.menu {
  position: absolute;
  display: flex;
  flex-direction: column;
  padding: 7px 6px;
  border: 2px solid #242424;
  border-radius: 8px;
  background: #181818;
  box-shadow: 0 2px 12px rgba(0, 0, 0, .45);
}
.add-menu { left: 999px; top: 505px; width: 362px; }
.sub-menu { left: 1360px; top: 1081px; width: 358px; padding: 6px 4px; }
.menu h3 { height: 40px; padding-left: 9px; color: #989898; font: inherit; line-height: 40px; }
.menu hr { height: 2px; margin: 6px 7px; border: 0; background: #303030; }
.menu button { height: 36px; margin: 2px 0; padding: 0 6px 0 16px; gap: 14px; border-radius: 7px; color: #d9d9d9; }
.menu button.on { background: #3f3f3f; color: #fff; }
.menu .a { width: 12px; height: 14px; margin-left: auto; color: #8a8a8a; }
.menu .on .a { color: #b0b0b0; }
.letter { font: 60px/16px "Liberation Serif", serif; text-align: center; }
.tooltip {
  position: absolute;
  left: 1409px;
  top: 1147px;
  padding: 10px 25px;
  border: 2px solid #242424;
  border-radius: 8px;
  background: #1b1b1b;
  box-shadow: 0 2px 10px rgba(0, 0, 0, .4);
}
.mark { position: absolute; border: 3px solid #ff2600; }
.mark-image { left: 972px; top: 1090px; width: 358px; height: 58px; }
.mark-reference { left: 1348px; top: 1067px; width: 221px; height: 69px; }
.note { position: absolute; left: 479px; top: 908px; color: #ff2600; font: 42px/52px "Noto Sans", "Noto Sans CJK SC", sans-serif; text-shadow: none; }
```
